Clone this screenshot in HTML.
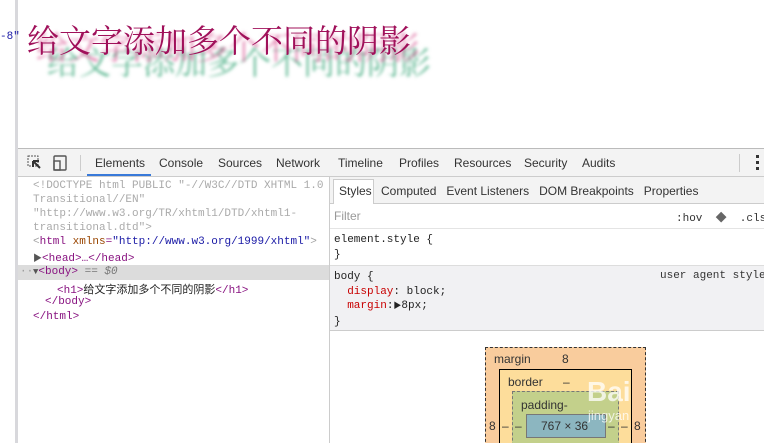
<!DOCTYPE html>
<html><head><meta charset="utf-8"><style>
*{margin:0;padding:0;box-sizing:border-box}
html,body{width:764px;height:443px;overflow:hidden}
body{background:#fff;position:relative;font-family:"Liberation Sans","Noto Sans CJK SC",sans-serif;}
.abs{position:absolute}
.mono{font-family:"Liberation Mono","Noto Sans CJK SC",monospace;font-size:11px}
.ui{font-size:12px;color:#333}
</style></head><body>
<div class="abs" style="left:15px;top:0;width:3px;height:443px;background:#d8d8dc"></div>
<div class="abs mono" style="left:0;top:31px;color:#1a1aa6">-8"</div>
<div class="abs" style="left:27px;top:20px;font-family:'Noto Serif CJK SC',serif;font-size:32px;line-height:38px;color:#a0105a;white-space:nowrap;text-shadow:9px 7px 3px rgba(210,60,130,.6),20px 22px 3px rgba(40,160,110,.7)">给文字添加多个不同的阴影</div>
<!-- toolbar -->
<div class="abs" style="left:18px;top:148px;width:746px;height:29px;background:#f3f3f3;border-top:1px solid #bbb;border-bottom:1px solid #ccc"></div>
<svg class="abs" style="left:26px;top:154px" width="46" height="18"><rect x="2" y="2" width="10" height="10" fill="none" stroke="#555" stroke-dasharray="2 1"/><path d="M7 7 L14 14 M7 7 L7 13 M7 7 L13 7" stroke="#333" stroke-width="2"/><rect x="28" y="2" width="12" height="14" rx="1" fill="none" stroke="#555" stroke-width="1.4"/><rect x="28" y="7" width="6" height="9" fill="none" stroke="#555" stroke-width="1.4"/></svg>
<div class="abs" style="left:80px;top:155px;width:1px;height:16px;background:#ccc"></div>
<div class="abs ui" style="top:156px;left:95px;white-space:nowrap">Elements</div>
<div class="abs" style="left:87px;top:174px;width:64px;height:2px;background:#3879d9"></div>
<div class="abs ui" style="top:156px;left:159px">Console</div>
<div class="abs ui" style="top:156px;left:218px">Sources</div>
<div class="abs ui" style="top:156px;left:276px">Network</div>
<div class="abs ui" style="top:156px;left:338px">Timeline</div>
<div class="abs ui" style="top:156px;left:399px">Profiles</div>
<div class="abs ui" style="top:156px;left:454px">Resources</div>
<div class="abs ui" style="top:156px;left:524px">Security</div>
<div class="abs ui" style="top:156px;left:582px">Audits</div>
<div class="abs" style="left:739px;top:154px;width:1px;height:18px;background:#ccc"></div>
<div class="abs" style="left:756px;top:155px;width:3px;height:3px;background:#333;box-shadow:0 6px 0 #333,0 12px 0 #333"></div>
<!-- elements -->
<div class="abs mono" style="left:33px;top:179px;line-height:14px;color:#aaa;white-space:pre">&lt;!DOCTYPE html PUBLIC "-//W3C//DTD XHTML 1.0
Transitional//EN"
"http://www.w3.org/TR/xhtml1/DTD/xhtml1-
transitional.dtd"&gt;</div>
<div class="abs mono" style="left:33px;top:236px;white-space:pre;color:#881280"><span style="color:#a0a0a0">&lt;</span>html <span style="color:#994500">xmlns</span>=<span style="color:#1a1aa6">"http://www.w3.org/1999/xhtml"</span><span style="color:#a0a0a0">&gt;</span></div>
<div class="abs mono" style="left:33px;top:251px;color:#881280;white-space:pre"><span style="color:#555;font-size:9px">▶</span>&lt;head&gt;…&lt;/head&gt;</div>
<div class="abs" style="left:18px;top:265px;width:312px;height:15px;background:#dcdcdc"></div>
<div class="abs mono" style="left:20px;top:266px;color:#999;white-space:pre">··</div>
<div class="abs mono" style="left:33px;top:266px;color:#881280;white-space:pre"><span style="color:#555;font-size:9px">▼</span>&lt;body&gt; <span style="color:#777;font-style:italic">== $0</span></div>
<div class="abs mono" style="left:57px;top:281px;color:#881280;white-space:pre">&lt;h1&gt;<span style="color:#222">给文字添加多个不同的阴影</span>&lt;/h1&gt;</div>
<div class="abs mono" style="left:45px;top:296px;color:#881280">&lt;/body&gt;</div>
<div class="abs mono" style="left:33px;top:311px;color:#881280">&lt;/html&gt;</div>
<!-- styles pane -->
<div class="abs" style="left:329px;top:177px;width:1px;height:266px;background:#ccc"></div>
<div class="abs" style="left:330px;top:177px;width:434px;height:27px;background:#f3f3f3;border-bottom:1px solid #ccc"></div>
<div class="abs" style="left:333px;top:179px;width:41px;height:25px;background:#fff;border:1px solid #ccc;border-bottom:none"></div>
<div class="abs ui" style="left:339px;top:184px">Styles</div>
<div class="abs ui" style="left:381px;top:184px;white-space:nowrap">Computed&nbsp;&nbsp; Event Listeners&nbsp;&nbsp; DOM Breakpoints&nbsp;&nbsp; Properties</div>
<div class="abs ui" style="left:334px;top:209px;color:#999">Filter</div>
<div class="abs mono" style="left:676px;top:209px;color:#333;white-space:pre">:hov  <span style="color:#666">◆</span>  .cls</div>
<div class="abs" style="left:330px;top:228px;width:434px;height:1px;background:#e4e4e4"></div>
<div class="abs mono" style="left:334px;top:233px;line-height:15px;color:#222;white-space:pre">element.style {
}</div>
<div class="abs" style="left:330px;top:265px;width:434px;height:66px;background:#f1f1f3;border-top:1px solid #ddd;border-bottom:1px solid #ccc"></div>
<div class="abs mono" style="left:334px;top:270px;line-height:14.5px;color:#222;white-space:pre">body {
  <span style="color:#c80000">display</span>: block;
  <span style="color:#c80000">margin</span>:<span style="font-size:8px">▶</span>8px;
}</div>
<div class="abs mono" style="left:660px;top:270px;color:#333;white-space:nowrap">user agent style</div>
<!-- box model -->
<div class="abs" style="left:485px;top:347px;width:161px;height:100px;background:#f9cc9d;border:1px dashed #333"></div>
<div class="abs ui" style="left:494px;top:352px">margin</div>
<div class="abs ui" style="left:562px;top:352px">8</div>
<div class="abs" style="left:499px;top:369px;width:133px;height:80px;background:#fddd9b;border:1px solid #000"></div>
<div class="abs ui" style="left:508px;top:375px">border</div>
<div class="abs ui" style="left:563px;top:375px">–</div>
<div class="abs" style="left:512px;top:391px;width:107px;height:60px;background:#c3d08b;border:1px dashed #777"></div>
<div class="abs ui" style="left:521px;top:398px">padding-</div>
<div class="abs" style="left:526px;top:414px;width:80px;height:24px;background:#8cb6c0;border:1px solid #777"></div>
<div class="abs ui" style="left:541px;top:419px;color:#333">767 × 36</div>
<div class="abs ui" style="left:489px;top:419px">8</div>
<div class="abs ui" style="left:502px;top:419px">–</div>
<div class="abs ui" style="left:515px;top:419px">–</div>
<div class="abs ui" style="left:608px;top:419px">–</div>
<div class="abs ui" style="left:621px;top:419px">–</div>
<div class="abs ui" style="left:634px;top:419px">8</div>
<div class="abs" style="left:587px;top:376px;font-size:28px;font-weight:bold;color:rgba(255,255,255,.75)">Bai</div>
<div class="abs" style="left:588px;top:408px;font-size:13px;color:rgba(255,255,255,.75)">jingyan</div>
</body></html>
